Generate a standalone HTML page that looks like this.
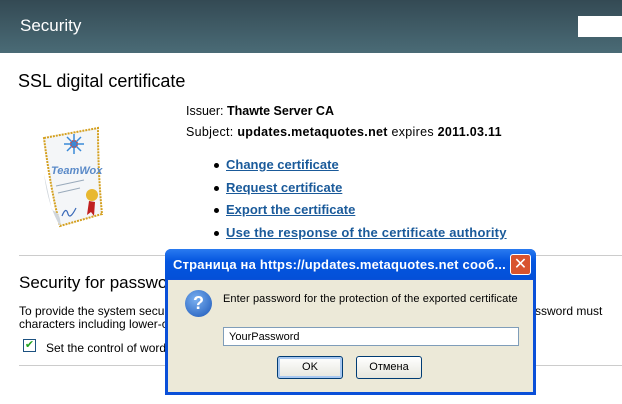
<!DOCTYPE html>
<html><head><meta charset="utf-8"><style>
*{margin:0;padding:0;box-sizing:border-box}
body{width:622px;height:404px;overflow:hidden;background:#fff;position:relative;font-family:"Liberation Sans","DejaVu Sans",sans-serif;color:#000}
.a{position:absolute;white-space:nowrap}
.hdr{left:0;top:0;width:622px;height:53px;background:linear-gradient(#344a54,#4a6b76)}
.hr{position:absolute;height:1px;background:#ccc}
a{color:#1a5a9a;font-weight:bold;text-decoration:underline;font-size:13px}
.dot{width:5px;height:5px;border-radius:50%;background:#000}
</style></head><body>
<div class="a hdr"></div>
<div class="a" style="left:20px;top:16px;color:#fff;font-size:17px;">Security</div>
<div class="a" style="left:578px;top:16px;width:44px;height:21px;background:#fff"></div>
<div class="a" style="left:18px;top:71px;font-size:18px;">SSL digital certificate</div>
<svg class="a" style="left:36px;top:118px" width="72" height="112" viewBox="0 0 72 112">
<path d="M8 20 L62 10 Q62 55 66 96 L24 108 Q14 68 8 20Z" fill="#f4f6f8" stroke="#d4a020" stroke-width="2" stroke-dasharray="2 1"/>
<path d="M24 108 Q26 96 16 92 L8 56 Q12 88 24 108Z" fill="#d0d6dc"/>
<circle cx="38" cy="26" r="4" fill="#e03020"/><path d="M38 16v20M28 26h20M31 19l14 14M45 19l-14 14" stroke="#3a8ad8" stroke-width="1.5"/>
<text x="15" y="56" font-size="11" font-style="italic" font-weight="bold" fill="#5a8ac8" font-family="Liberation Sans">TeamWox</text>
<path d="M20 68l28-6M22 75l22-5" stroke="#9ab" stroke-width="1"/>
<circle cx="56" cy="77" r="6" fill="#e8b830"/><path d="M53 83l-2 14 4-3 3 4 1-14" fill="#c02020"/>
<path d="M26 98 q4-10 6-2 q2 6 8-6" stroke="#3a6ab8" fill="none" stroke-width="1.2"/>
</svg>
<div class="a" style="left:186px;top:104px;font-size:12.5px;">Issuer: <b>Thawte Server CA</b></div>
<div class="a" style="left:186px;top:125px;font-size:12.5px;letter-spacing:0.3px">Subject: <b>updates.metaquotes.net</b> expires <b>2011.03.11</b></div>
<div class="a dot" style="left:214px;top:163px"></div><a class="a" style="left:226px;top:157px">Change certificate</a>
<div class="a dot" style="left:214px;top:186px"></div><a class="a" style="left:226px;top:180px">Request certificate</a>
<div class="a dot" style="left:214px;top:208px"></div><a class="a" style="left:226px;top:202px">Export the certificate</a>
<div class="a dot" style="left:214px;top:231px"></div><a class="a" style="left:226px;top:225px;letter-spacing:0.2px">Use the response of the certificate authority</a>
<div class="hr" style="left:19px;top:255px;width:603px"></div>
<div class="a" style="left:19px;top:273px;font-size:17px;">Security for passwords</div>
<div class="a" style="left:19px;top:304px;font-size:12px;">To provide the system security</div>
<div class="a" style="left:19px;top:317px;font-size:12px;">characters including lower-case</div>
<div class="a" style="left:535px;top:304px;font-size:12px;">ssword must</div>
<div class="a" style="left:23px;top:339px;width:13px;height:13px;border:1px solid #1c5180;background:#fff;color:#21a121;font-size:11px;line-height:11px;text-align:center;font-weight:bold">✔</div>
<div class="a" style="left:46px;top:341px;font-size:12px;">Set the control of words</div>
<div class="hr" style="left:19px;top:365px;width:603px"></div>
<div class="a" style="left:165px;top:249px;width:371px;height:146px;background:#0a4fd8;border-radius:6px 6px 0 0;"></div>
<div class="a" style="left:165px;top:249px;width:371px;height:30px;background:linear-gradient(#2a7af0,#0556e0 40%,#0450d8);border-radius:6px 6px 0 0"></div>
<div class="a" style="left:173px;top:257px;color:#fff;font-weight:bold;font-size:13px;letter-spacing:0.2px">Страница на https://updates.metaquotes.net сооб...</div>
<div class="a" style="left:510px;top:254px;width:21px;height:21px;border:1px solid #fff;border-radius:3px;background:#d8532e;color:#fff;font-size:16px;line-height:19px;text-align:center;font-weight:bold">✕</div>
<div class="a" style="left:168px;top:280px;width:365px;height:112px;background:#ece9d8"></div>
<div class="a" style="left:185px;top:290px;width:27px;height:27px;border-radius:50%;background:radial-gradient(circle at 40% 35%,#7ab0f0,#1a56b8);color:#fff;font-weight:bold;font-size:18px;line-height:27px;text-align:center">?</div>
<div class="a" style="left:223px;top:293px;font-size:11px;letter-spacing:0.1px">Enter password for the protection of the exported certificate</div>
<div class="a" style="left:223px;top:327px;width:296px;height:19px;border:1px solid #7f9db9;background:#fff;font-size:11px;padding:3px 0 0 5px">YourPassword</div>
<div class="a" style="left:277px;top:356px;width:66px;height:23px;border:1px solid #003c74;border-radius:3px;background:linear-gradient(#fff,#e6e6dd);box-shadow:inset 0 0 0 2px #a8c8f0;font-size:11px;text-align:center;line-height:21px">OK</div>
<div class="a" style="left:356px;top:356px;width:66px;height:23px;border:1px solid #003c74;border-radius:3px;background:linear-gradient(#fff,#e6e6dd);font-size:11px;text-align:center;line-height:21px">Отмена</div>
</body></html>
